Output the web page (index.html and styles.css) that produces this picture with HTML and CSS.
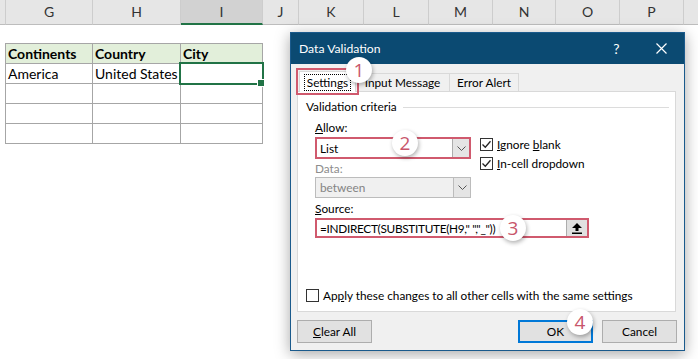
FILE: index.html
```html
<!DOCTYPE html>
<html>
<head>
<meta charset="utf-8">
<link rel="stylesheet" href="styles.css">
</head>
<body>
<div class="colhead">
  <div class="ch"></div>
  <div class="ch">G</div>
  <div class="ch">H</div>
  <div class="ch sel">I</div>
  <div class="ch">J</div>
  <div class="ch">K</div>
  <div class="ch">L</div>
  <div class="ch">M</div>
  <div class="ch">N</div>
  <div class="ch">O</div>
  <div class="ch">P</div>
  <div class="ch last"></div>
</div>
<div class="table">
  <div class="c h">Continents</div>
  <div class="c h">Country</div>
  <div class="c h">City</div>
  <div class="c">America</div>
  <div class="c">United States</div>
  <div class="c"></div>
  <div class="c"></div><div class="c"></div><div class="c"></div>
  <div class="c"></div><div class="c"></div><div class="c"></div>
  <div class="c"></div><div class="c"></div><div class="c"></div>
  <div class="selbox"></div>
  <div class="handle"></div>
</div>

<div class="dialog">
  <div class="titlebar">
    <div class="title">Data Validation</div>
    <div class="tbtn">?</div>
    <div class="tbtn">
      <svg width="11" height="11" viewBox="0 0 11 11"><path d="M0.5 0.5 L10.5 10.5 M10.5 0.5 L0.5 10.5" stroke="#fff" stroke-width="1.2" fill="none"/></svg>
    </div>
  </div>
  <div class="tabs">
    <div class="tab active"><span class="focus">Settings</span></div>
    <div class="tab t2">Input Message</div>
    <div class="tab t3">Error Alert</div>
  </div>
  <div class="panel">
    <div class="legend"><span>Validation criteria</span><div class="rule"></div></div>
    <div class="block">
      <div class="lbl"><u>A</u>llow:</div>
      <div class="allowrow">
        <div class="leftcol">
          <div class="combo hl"><span>List</span><div class="dd"><svg width="9" height="5" viewBox="0 0 9 5"><polyline points="0.5,0.5 4.5,4.5 8.5,0.5" fill="none" stroke="#555" stroke-width="1"/></svg></div></div>
          <div class="lbl dis gap2">Data:</div>
          <div class="combo disabled"><span>between</span><div class="dd"><svg width="9" height="5" viewBox="0 0 9 5"><polyline points="0.5,0.5 4.5,4.5 8.5,0.5" fill="none" stroke="#555" stroke-width="1"/></svg></div></div>
        </div>
        <div class="rightcol">
          <div class="cbrow"><div class="cb"><svg width="11" height="11" viewBox="0 0 11 11"><polyline points="1.5,5.5 4.3,8.3 9.5,2.3" fill="none" stroke="#222" stroke-width="1.3"/></svg></div><span><u>I</u>gnore <u>b</u>lank</span></div>
          <div class="cbrow"><div class="cb"><svg width="11" height="11" viewBox="0 0 11 11"><polyline points="1.5,5.5 4.3,8.3 9.5,2.3" fill="none" stroke="#222" stroke-width="1.3"/></svg></div><span><u>I</u>n-cell dropdown</span></div>
        </div>
      </div>
      <div class="lbl gap3"><u>S</u>ource:</div>
      <div class="source"><span class="formula">=INDIRECT(SUBSTITUTE(H9," ","_"))</span><div class="upbtn"><svg width="10" height="11" viewBox="0 0 10 11"><polygon points="5,0 10,5 6.5,5 6.5,8 3.5,8 3.5,5 0,5" fill="#000"/><rect x="0" y="9.5" width="10" height="1.5" fill="#000"/></svg></div></div>
    </div>
    <div class="cbrow apply"><div class="cb"></div><span>Ap<u>p</u>ly these changes to all other cells with the same settings</span></div>
  </div>
  <div class="btnrow">
    <div class="btn"><u>C</u>lear All</div>
    <div class="spacer"></div>
    <div class="btn ok">OK</div>
    <div class="btn cancel">Cancel</div>
  </div>
</div>

<div class="badge b1">1</div>
<div class="badge b2">2</div>
<div class="badge b3">3</div>
<div class="badge b4">4</div>
</body>
</html>
```
FILE: styles.css
```css
body {
  margin: 0;
  width: 698px;
  height: 359px;
  overflow: hidden;
  position: relative;
  background: #fff;
  font-family: Lato, "Liberation Sans", sans-serif;
}

.colhead {
  display: grid;
  grid-template-columns: 6px 87px 88px 82px 36px 65px 65px 64px 63px 64px 64px 1fr;
  height: 24px;
  background: #e6e6e6;
}
.ch {
  box-sizing: border-box;
  border-right: 1px solid #cdcdcd;
  border-bottom: 1px solid #bdbdbd;
  text-align: center;
  font-size: 14px;
  line-height: 22px;
  padding-top: 1px;
  color: #333;
}
.ch.sel {
  background: #d2d2d2;
  border-bottom: 2px solid #217346;
}
.ch.last { border-right: none; }

.table {
  margin: 19px 0 0 5px;
  display: grid;
  grid-template-columns: 87px 88px 82px;
  grid-auto-rows: 20px;
  width: max-content;
  border-left: 1px solid #a6a6a6;
  border-top: 1px solid #a6a6a6;
  position: relative;
}
.c {
  box-sizing: border-box;
  border-right: 1px solid #a6a6a6;
  border-bottom: 1px solid #a6a6a6;
  font-size: 14px;
  line-height: 19px;
  padding-left: 2px;
  white-space: nowrap;
  overflow: hidden;
  color: #000;
}
.c.h {
  background: #e2efda;
  font-weight: bold;
}
.selbox {
  position: absolute;
  left: 173px;
  top: 18px;
  width: 85px;
  height: 23px;
  box-sizing: border-box;
  border: 2px solid #217346;
}
.handle {
  position: absolute;
  left: 252px;
  top: 36px;
  width: 6px;
  height: 6px;
  background: #217346;
  box-shadow: 0 0 0 1px #fff;
}

.dialog {
  position: absolute;
  left: 290px;
  top: 32px;
  width: 395px;
  height: 319px;
  box-sizing: border-box;
  border: 1px solid #1a5a8c;
  background: #f0f0f0;
  box-shadow: 0 3px 14px rgba(0, 0, 0, 0.35);
  display: flex;
  flex-direction: column;
  font-size: 11.8px;
  color: #000;
}
.titlebar {
  height: 31px;
  flex: none;
  background: #0b4a72;
  color: #fff;
  display: flex;
  align-items: center;
  padding-left: 8px;
  font-size: 12.2px;
}
.title { flex: 1; }
.tbtn {
  width: 45px;
  height: 31px;
  display: flex;
  align-items: center;
  justify-content: center;
  font-size: 14px;
}

.tabs {
  height: 28px;
  flex: none;
  display: flex;
  align-items: flex-end;
  padding-left: 8px;
  margin-bottom: -1px;
  position: relative;
  z-index: 1;
}
.tab {
  box-sizing: border-box;
  height: 19px;
  border: 1px solid #d9d9d9;
  border-left: none;
  background: #f0f0f0;
  display: flex;
  align-items: center;
  justify-content: center;
}
.tab.active {
  width: 57px;
  height: 21px;
  border-left: 1px solid #d9d9d9;
  border-bottom: none;
  background: #fff;
  outline: 2px solid #d05a6e;
  outline-offset: 1px;
  position: relative;
  z-index: 2;
}
.focus {
  border: 1px dotted #000;
  padding: 0 2px;
  line-height: 15px;
}
.t2 { width: 94px; }
.t3 { width: 69px; }

.panel {
  height: 221px;
  flex: none;
  box-sizing: border-box;
  margin: 0 8px 0 6px;
  border: 1px solid #d9d9d9;
  background: #fff;
  padding: 0 6px 0 8px;
}
.legend {
  display: flex;
  align-items: center;
  margin-top: 7px;
  height: 16px;
  line-height: 16px;
}
.rule {
  flex: 1;
  height: 1px;
  background: #dcdcdc;
  margin-left: 6px;
}
.block { margin-left: 9px; }
.lbl {
  height: 16px;
  line-height: 16px;
  margin-top: 5px;
}
.lbl.gap2 { margin-top: 2px; }
.lbl.gap3 { margin-top: 3px; }
.lbl.dis { color: #8d8d8d; }

.allowrow {
  display: flex;
  margin-top: 1px;
}
.leftcol { width: 156px; }
.combo {
  box-sizing: border-box;
  height: 22px;
  border: 1px solid #adadad;
  background: #fff;
  display: flex;
  align-items: center;
  padding-left: 4px;
}
.combo.hl {
  border: 2px solid #d05a6e;
  padding-left: 3px;
}
.combo.disabled {
  height: 21px;
  background: #f0f0f0;
  color: #838383;
  border-color: #bcbcbc;
}
.dd {
  margin-left: auto;
  width: 16px;
  align-self: stretch;
  background: #e5e5e5;
  border-left: 1px solid #bcbcbc;
  display: flex;
  align-items: center;
  justify-content: center;
}
.combo.hl .dd { border-left-color: #adadad; }

.rightcol {
  margin-left: 9px;
  padding-top: 1px;
}
.cbrow {
  display: flex;
  align-items: center;
  height: 13px;
  margin-bottom: 6px;
  white-space: nowrap;
}
.cb {
  box-sizing: border-box;
  width: 13px;
  height: 13px;
  border: 1px solid #333;
  background: #fff;
  margin-right: 4px;
  display: flex;
  align-items: center;
  justify-content: center;
  flex: none;
}

.source {
  box-sizing: border-box;
  width: 274px;
  height: 20px;
  margin-top: 1px;
  border: 2px solid #d05a6e;
  background: #fff;
  display: flex;
  align-items: center;
  padding-left: 3px;
}
.formula {
  flex: 1;
  white-space: nowrap;
  letter-spacing: -0.3px;
}
.upbtn {
  width: 20px;
  align-self: stretch;
  background: #e1e1e1;
  border-left: 1px solid #adadad;
  display: flex;
  align-items: center;
  justify-content: center;
}

.apply {
  margin-top: 49px;
  height: 16px;
  margin-bottom: 0;
}

.btnrow {
  display: flex;
  margin-top: 8px;
  padding: 0 7px 0 6px;
}
.spacer { flex: 1; }
.btn {
  box-sizing: border-box;
  width: 75px;
  height: 23px;
  background: #e1e1e1;
  border: 1px solid #adadad;
  display: flex;
  align-items: center;
  justify-content: center;
}
.btn.ok { border: 2px solid #0078d7; }
.btn.cancel { margin-left: 9px; }

.badge {
  position: absolute;
  width: 26px;
  height: 26px;
  border-radius: 50%;
  background: #fff;
  box-shadow: 1px 2px 4px rgba(0, 0, 0, 0.3);
  color: #c8566b;
  font-family: "Open Sans", Lato, sans-serif;
  font-size: 19px;
  line-height: 27px;
  text-align: center;
  z-index: 5;
}
.b1 { left: 346px; top: 57px; }
.b2 { left: 392px; top: 130px; }
.b3 { left: 500px; top: 215px; }
.b4 { left: 567px; top: 309px; }
```
